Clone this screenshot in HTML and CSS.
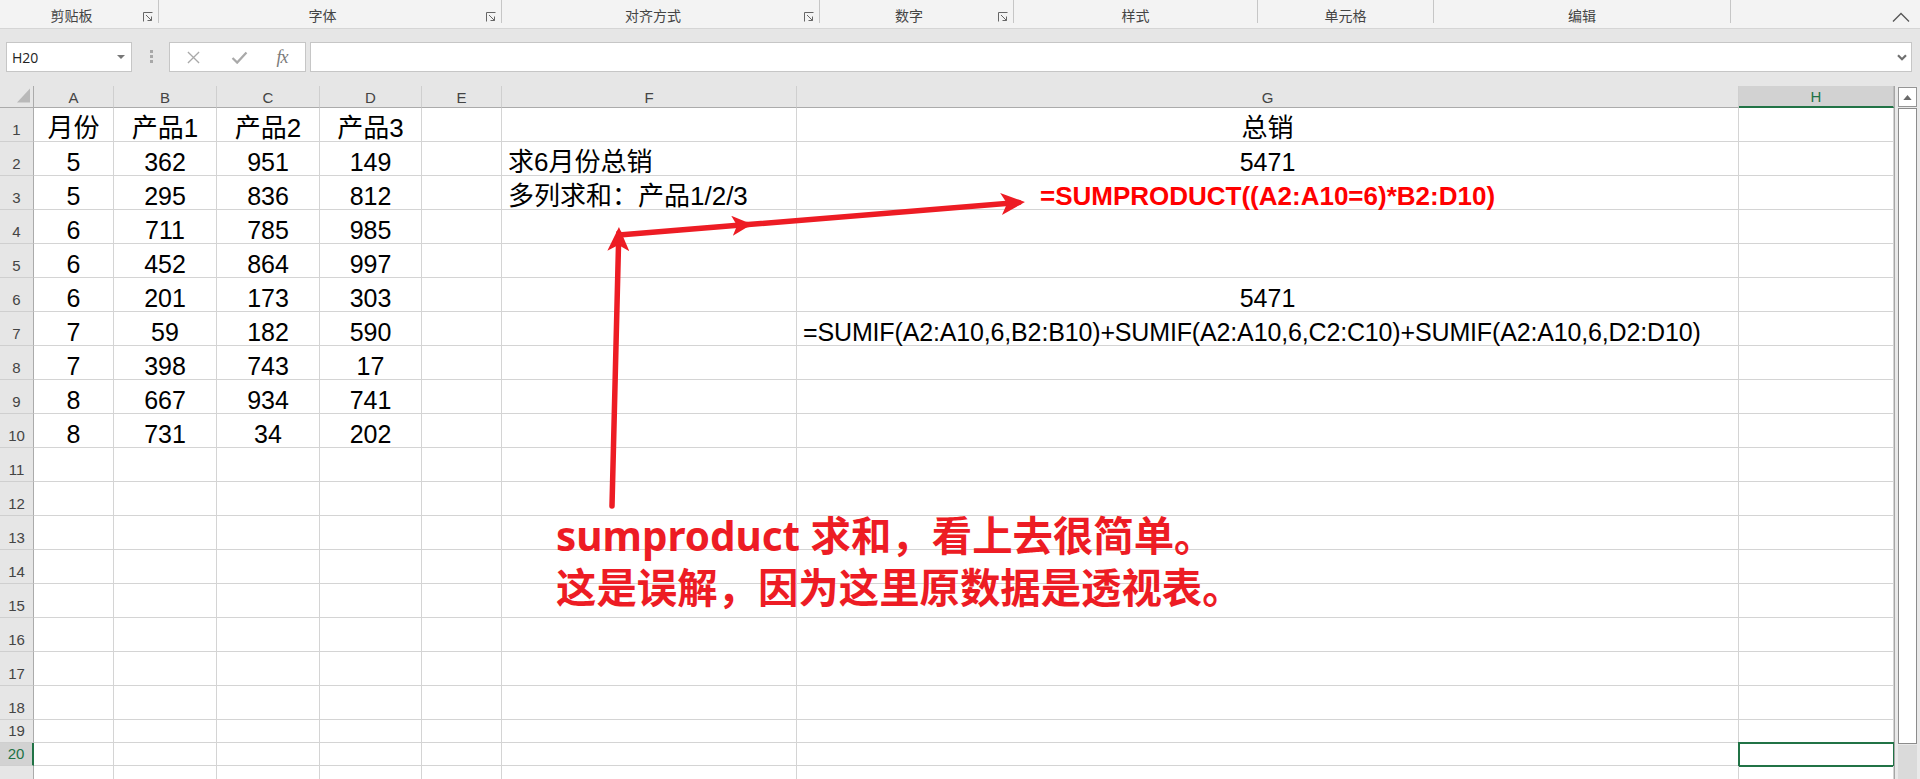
FILE: index.html
```html
<!DOCTYPE html>
<html lang="zh-CN">
<head>
<meta charset="utf-8">
<title>Excel - SUMPRODUCT</title>
<link rel="stylesheet" href="styles.css">
</head>
<body>
<div class="app">
  <div class="ribbon">
    <div class="grp w1"><span class="lbl">剪贴板</span><svg class="launch" viewBox="0 0 10 10"><path d="M0.5 9.5V0.5H9.5"/><path d="M3 3L8.5 8.5M8.5 4.5V8.5H4.5"/></svg></div>
    <div class="grp w2"><span class="lbl">字体</span><svg class="launch" viewBox="0 0 10 10"><path d="M0.5 9.5V0.5H9.5"/><path d="M3 3L8.5 8.5M8.5 4.5V8.5H4.5"/></svg></div>
    <div class="grp w3"><span class="lbl">对齐方式</span><svg class="launch" viewBox="0 0 10 10"><path d="M0.5 9.5V0.5H9.5"/><path d="M3 3L8.5 8.5M8.5 4.5V8.5H4.5"/></svg></div>
    <div class="grp w4"><span class="lbl">数字</span><svg class="launch" viewBox="0 0 10 10"><path d="M0.5 9.5V0.5H9.5"/><path d="M3 3L8.5 8.5M8.5 4.5V8.5H4.5"/></svg></div>
    <div class="grp w5"><span class="lbl">样式</span></div>
    <div class="grp w6"><span class="lbl">单元格</span></div>
    <div class="grp w7"><span class="lbl">编辑</span></div>
    <div class="grp w8 last"><svg class="caret" viewBox="0 0 18 10"><path d="M1 9.5L9 1.5L17 9.5"/></svg></div>
  </div>

  <div class="fbar">
    <div class="namebox"><span>H20</span><svg class="tri" viewBox="0 0 8 4"><path d="M0 0H8L4 4Z"/></svg></div>
    <div class="grip"><i></i><i></i><i></i></div>
    <div class="fbtns">
      <span class="slot"><svg class="xic" viewBox="0 0 14 14"><path d="M1 1L13 13M13 1L1 13"/></svg></span>
      <span class="slot"><svg class="chk" viewBox="0 0 18 14"><path d="M1.5 7.5L6.5 12.5L16.5 1.5"/></svg></span>
      <span class="slot fx">fx</span>
    </div>
    <div class="finput"><svg class="chev" viewBox="0 0 10 7"><path d="M1 1.2L5 5.2L9 1.2"/></svg></div>
  </div>

  <div class="sheet">
    <div class="grid">
      <div class="row hdr">
        <div class="corner"><svg viewBox="0 0 14 15"><path d="M14 0V15H0Z"/></svg></div>
        <div class="ch">A</div><div class="ch">B</div><div class="ch">C</div><div class="ch">D</div><div class="ch">E</div><div class="ch">F</div><div class="ch">G</div><div class="ch on">H</div>
      </div>
      <div class="row">
        <div class="rh">1</div>
        <div class="c cj">月份</div><div class="c cj">产品1</div><div class="c cj">产品2</div><div class="c cj">产品3</div><div class="c"></div><div class="c"></div><div class="c cj">总销</div><div class="c"></div>
      </div>
      <div class="row">
        <div class="rh">2</div>
        <div class="c">5</div><div class="c">362</div><div class="c">951</div><div class="c">149</div><div class="c"></div><div class="c l cj">求6月份总销</div><div class="c">5471</div><div class="c"></div>
      </div>
      <div class="row">
        <div class="rh">3</div>
        <div class="c">5</div><div class="c">295</div><div class="c">836</div><div class="c">812</div><div class="c"></div><div class="c l cj">多列求和：产品1/2/3</div><div class="c red">=SUMPRODUCT((A2:A10=6)*B2:D10)</div><div class="c"></div>
      </div>
      <div class="row">
        <div class="rh">4</div>
        <div class="c">6</div><div class="c">711</div><div class="c">785</div><div class="c">985</div><div class="c"></div><div class="c"></div><div class="c"></div><div class="c"></div>
      </div>
      <div class="row">
        <div class="rh">5</div>
        <div class="c">6</div><div class="c">452</div><div class="c">864</div><div class="c">997</div><div class="c"></div><div class="c"></div><div class="c"></div><div class="c"></div>
      </div>
      <div class="row">
        <div class="rh">6</div>
        <div class="c">6</div><div class="c">201</div><div class="c">173</div><div class="c">303</div><div class="c"></div><div class="c"></div><div class="c">5471</div><div class="c"></div>
      </div>
      <div class="row">
        <div class="rh">7</div>
        <div class="c">7</div><div class="c">59</div><div class="c">182</div><div class="c">590</div><div class="c"></div><div class="c"></div><div class="c l tight">=SUMIF(A2:A10,6,B2:B10)+SUMIF(A2:A10,6,C2:C10)+SUMIF(A2:A10,6,D2:D10)</div><div class="c"></div>
      </div>
      <div class="row">
        <div class="rh">8</div>
        <div class="c">7</div><div class="c">398</div><div class="c">743</div><div class="c">17</div><div class="c"></div><div class="c"></div><div class="c"></div><div class="c"></div>
      </div>
      <div class="row">
        <div class="rh">9</div>
        <div class="c">8</div><div class="c">667</div><div class="c">934</div><div class="c">741</div><div class="c"></div><div class="c"></div><div class="c"></div><div class="c"></div>
      </div>
      <div class="row">
        <div class="rh">10</div>
        <div class="c">8</div><div class="c">731</div><div class="c">34</div><div class="c">202</div><div class="c"></div><div class="c"></div><div class="c"></div><div class="c"></div>
      </div>
      <div class="row"><div class="rh">11</div><div class="c"></div><div class="c"></div><div class="c"></div><div class="c"></div><div class="c"></div><div class="c"></div><div class="c"></div><div class="c"></div></div>
      <div class="row"><div class="rh">12</div><div class="c"></div><div class="c"></div><div class="c"></div><div class="c"></div><div class="c"></div><div class="c"></div><div class="c"></div><div class="c"></div></div>
      <div class="row"><div class="rh">13</div><div class="c"></div><div class="c"></div><div class="c"></div><div class="c"></div><div class="c"></div><div class="c"></div><div class="c"></div><div class="c"></div></div>
      <div class="row"><div class="rh">14</div><div class="c"></div><div class="c"></div><div class="c"></div><div class="c"></div><div class="c"></div><div class="c"></div><div class="c"></div><div class="c"></div></div>
      <div class="row"><div class="rh">15</div><div class="c"></div><div class="c"></div><div class="c"></div><div class="c"></div><div class="c"></div><div class="c"></div><div class="c"></div><div class="c"></div></div>
      <div class="row"><div class="rh">16</div><div class="c"></div><div class="c"></div><div class="c"></div><div class="c"></div><div class="c"></div><div class="c"></div><div class="c"></div><div class="c"></div></div>
      <div class="row"><div class="rh">17</div><div class="c"></div><div class="c"></div><div class="c"></div><div class="c"></div><div class="c"></div><div class="c"></div><div class="c"></div><div class="c"></div></div>
      <div class="row"><div class="rh">18</div><div class="c"></div><div class="c"></div><div class="c"></div><div class="c"></div><div class="c"></div><div class="c"></div><div class="c"></div><div class="c"></div></div>
      <div class="row sm"><div class="rh">19</div><div class="c"></div><div class="c"></div><div class="c"></div><div class="c"></div><div class="c"></div><div class="c"></div><div class="c"></div><div class="c"></div></div>
      <div class="row sm"><div class="rh on">20</div><div class="c"></div><div class="c"></div><div class="c"></div><div class="c"></div><div class="c"></div><div class="c"></div><div class="c"></div><div class="c sel"></div></div>
      <div class="row sm"><div class="rh"></div><div class="c"></div><div class="c"></div><div class="c"></div><div class="c"></div><div class="c"></div><div class="c"></div><div class="c"></div><div class="c"></div></div>
    </div>
    <div class="vscroll">
      <div class="sbtn"><svg viewBox="0 0 10 6"><path d="M0 6L5 0L10 6Z"/></svg></div>
      <div class="thumb"></div>
      <div class="track"></div>
    </div>
  </div>

  <div class="note">sumproduct 求和，看上去很简单。<br>这是误解，因为这里原数据是透视表。</div>

  <svg class="arrows" viewBox="0 0 1920 779">
    <defs>
      <marker id="ah" markerUnits="userSpaceOnUse" markerWidth="26" markerHeight="22" refX="18" refY="11" orient="auto">
        <path d="M0 0L24 11L0 22L6 11Z" fill="#ed1c24"/>
      </marker>
      <marker id="ah2" markerUnits="userSpaceOnUse" markerWidth="22" markerHeight="20" refX="15" refY="10" orient="auto">
        <path d="M0 0L20 10L0 20L5 10Z" fill="#ed1c24"/>
      </marker>
    </defs>
    <path class="ln" d="M612 506L618.8 233" marker-end="url(#ah)"/>
    <path class="ln" d="M619 235L747 224.6" marker-end="url(#ah2)"/>
    <path class="ln" d="M745 224.8L1019 202.5" marker-end="url(#ah)"/>
  </svg>
</div>
</body>
</html>
```

FILE: styles.css
```css
* { box-sizing: border-box; margin: 0; padding: 0; }
html, body { width: 1920px; height: 779px; overflow: hidden; background: #fff; }
body { font-family: "Noto Sans CJK SC", sans-serif; color: #000; }

.app { position: relative; width: 1920px; height: 779px; overflow: hidden; background: #fff; }

/* ribbon group labels */
.ribbon { display: flex; align-items: flex-start; height: 29px; background: #f3f3f3; border-bottom: 1px solid #d5d5d5; }
.grp { display: flex; align-items: flex-end; height: 23px; border-right: 1px solid #c6c6c6; }
.grp.last { border-right: none; justify-content: flex-end; }
.lbl { flex: 1; text-align: center; font-size: 14px; line-height: 16px; color: #444; font-family: "Noto Sans CJK SC", sans-serif; }
.launch { width: 10px; height: 10px; margin: 0 5px 1px 0; fill: none; stroke: #666; stroke-width: 1; }
.caret { width: 18px; height: 10px; margin: 0 10px 1px 0; fill: none; stroke: #555; stroke-width: 1.3; }
.w1 { width: 159px; } .w2 { width: 343px; } .w3 { width: 318px; } .w4 { width: 194px; }
.w5 { width: 244px; } .w6 { width: 176px; } .w7 { width: 297px; } .w8 { width: 189px; }

/* formula bar */
.fbar { display: flex; align-items: flex-start; height: 57px; padding-top: 13px; background: #e6e6e6; }
.namebox { display: flex; align-items: center; justify-content: space-between; width: 126px; height: 30px; margin-left: 6px; padding: 0 6px 0 5px; background: #fff; border: 1px solid #c6c6c6; font-family: "Open Sans", "Noto Sans", sans-serif; font-size: 14px; color: #222; }
.tri { width: 8px; height: 4px; fill: #777; }
.grip { display: flex; flex-direction: column; gap: 2px; margin: 8px 0 0 18px; }
.grip i { display: block; width: 3px; height: 3px; background: #a8a8a8; }
.fbtns { display: flex; align-items: center; width: 137px; height: 30px; margin-left: 16px; background: #fff; border: 1px solid #c6c6c6; }
.slot { display: flex; align-items: center; justify-content: center; width: 46px; height: 28px; }
.slot.fx { width: 40px; font-family: "Liberation Serif", serif; font-style: italic; font-size: 18px; color: #7a7a7a; letter-spacing: -1px; }
.xic { width: 13px; height: 13px; fill: none; stroke: #a9a9a9; stroke-width: 1.4; }
.chk { width: 17px; height: 13px; fill: none; stroke: #a9a9a9; stroke-width: 2.4; }
.finput { display: flex; align-items: center; justify-content: flex-end; width: 1602px; height: 30px; margin-left: 4px; padding-right: 4px; background: #fff; border: 1px solid #c6c6c6; }
.chev { width: 10px; height: 7px; fill: none; stroke: #6f6f6f; stroke-width: 2.2; }

/* sheet */
.sheet { display: flex; }
.grid { width: 1894px; }
.row { display: grid; grid-template-columns: 34px 80px 103px 103px 102px 80px 295px 942px 155px; height: 34px; }
.row.sm { height: 23px; }
.row.hdr { height: 22px; }

.corner { display: flex; align-items: flex-end; justify-content: flex-end; padding: 0 3px 4px 0; background: #e6e6e6; border-right: 1px solid #ababab; border-bottom: 1px solid #ababab; }
.corner svg { width: 13px; height: 15px; fill: #b9b9b9; }
.ch { display: flex; align-items: center; justify-content: center; padding-top: 1px; background: #e6e6e6; border-right: 1px solid #cfcfcf; border-bottom: 1px solid #ababab; font-family: "Liberation Sans", sans-serif; font-size: 15px; color: #444; }
.ch.on { background: #d2d2d2; color: #217346; border-bottom: 2px solid #217346; border-right-color: #bdbdbd; }

.rh { display: flex; align-items: flex-end; justify-content: center; padding-bottom: 2px; background: #e6e6e6; border-right: 1px solid #ababab; border-bottom: 1px solid #cfcfcf; font-family: "Liberation Sans", sans-serif; font-size: 15px; line-height: 18px; color: #444; }
.rh.on { background: #d2d2d2; color: #217346; border-right: 2px solid #217346; }

.c { display: flex; align-items: flex-end; justify-content: center; border-right: 1px solid #d4d4d4; border-bottom: 1px solid #d4d4d4; font-family: "Liberation Sans", "Noto Sans CJK SC", sans-serif; font-size: 25px; line-height: 26px; white-space: nowrap; color: #000; }
.c.cj { font-size: 26px; }
.c.l { justify-content: flex-start; padding-left: 6px; }
.c.tight { letter-spacing: -0.15px; }
.c.red { color: #ff0000; font-weight: 700; font-size: 26px; }
.c.sel { outline: 2px solid #217346; outline-offset: -1px; }

/* vertical scrollbar */
.vscroll { display: flex; flex-direction: column; gap: 1px; width: 26px; height: 693px; padding: 1px 3px 0 3px; background: #e9e9e9; border-left: 1px solid #a6a6a6; }
.sbtn { display: flex; align-items: center; justify-content: center; height: 20px; background: #fff; border: 1px solid #959595; }
.sbtn svg { width: 9px; height: 5px; fill: #6a6a6a; }
.thumb { height: 636px; background: #fff; border: 1px solid #8c8c8c; }
.track { flex: 1; background: #dadada; }

/* annotation overlay */
.note { position: absolute; left: 556px; top: 510px; font-family: "Noto Sans", "Noto Sans CJK SC", sans-serif; font-weight: 700; font-size: 40.4px; line-height: 52px; color: #ed1c24; white-space: nowrap; }
.arrows { position: absolute; left: 0; top: 0; width: 1920px; height: 779px; pointer-events: none; }
.ln { fill: none; stroke: #ed1c24; stroke-width: 5.5; stroke-linecap: round; }
```
